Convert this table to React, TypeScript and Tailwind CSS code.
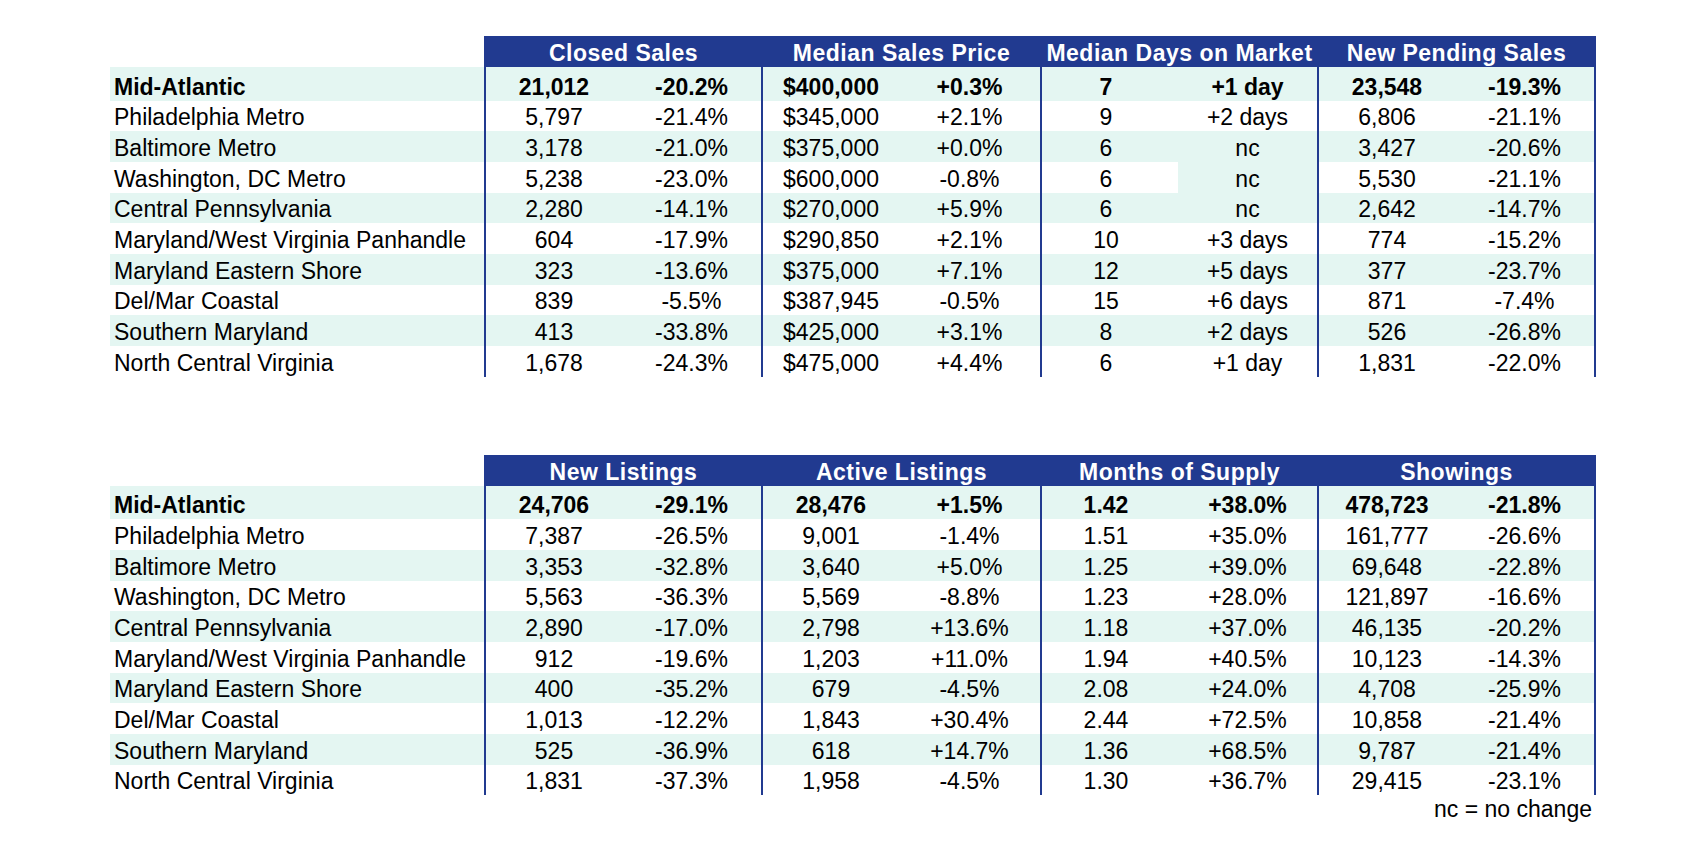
type Row = string[];

const blue = "border-[#213a90]";

const topHeaders = ["Closed Sales", "Median Sales Price", "Median Days on Market", "New Pending Sales"];
const bottomHeaders = ["New Listings", "Active Listings", "Months of Supply", "Showings"];

const topRows: Row[] = [
  ["Mid-Atlantic", "21,012", "-20.2%", "$400,000", "+0.3%", "7", "+1 day", "23,548", "-19.3%"],
  ["Philadelphia Metro", "5,797", "-21.4%", "$345,000", "+2.1%", "9", "+2 days", "6,806", "-21.1%"],
  ["Baltimore Metro", "3,178", "-21.0%", "$375,000", "+0.0%", "6", "nc", "3,427", "-20.6%"],
  ["Washington, DC Metro", "5,238", "-23.0%", "$600,000", "-0.8%", "6", "nc", "5,530", "-21.1%"],
  ["Central Pennsylvania", "2,280", "-14.1%", "$270,000", "+5.9%", "6", "nc", "2,642", "-14.7%"],
  ["Maryland/West Virginia Panhandle", "604", "-17.9%", "$290,850", "+2.1%", "10", "+3 days", "774", "-15.2%"],
  ["Maryland Eastern Shore", "323", "-13.6%", "$375,000", "+7.1%", "12", "+5 days", "377", "-23.7%"],
  ["Del/Mar Coastal", "839", "-5.5%", "$387,945", "-0.5%", "15", "+6 days", "871", "-7.4%"],
  ["Southern Maryland", "413", "-33.8%", "$425,000", "+3.1%", "8", "+2 days", "526", "-26.8%"],
  ["North Central Virginia", "1,678", "-24.3%", "$475,000", "+4.4%", "6", "+1 day", "1,831", "-22.0%"],
];

const bottomRows: Row[] = [
  ["Mid-Atlantic", "24,706", "-29.1%", "28,476", "+1.5%", "1.42", "+38.0%", "478,723", "-21.8%"],
  ["Philadelphia Metro", "7,387", "-26.5%", "9,001", "-1.4%", "1.51", "+35.0%", "161,777", "-26.6%"],
  ["Baltimore Metro", "3,353", "-32.8%", "3,640", "+5.0%", "1.25", "+39.0%", "69,648", "-22.8%"],
  ["Washington, DC Metro", "5,563", "-36.3%", "5,569", "-8.8%", "1.23", "+28.0%", "121,897", "-16.6%"],
  ["Central Pennsylvania", "2,890", "-17.0%", "2,798", "+13.6%", "1.18", "+37.0%", "46,135", "-20.2%"],
  ["Maryland/West Virginia Panhandle", "912", "-19.6%", "1,203", "+11.0%", "1.94", "+40.5%", "10,123", "-14.3%"],
  ["Maryland Eastern Shore", "400", "-35.2%", "679", "-4.5%", "2.08", "+24.0%", "4,708", "-25.9%"],
  ["Del/Mar Coastal", "1,013", "-12.2%", "1,843", "+30.4%", "2.44", "+72.5%", "10,858", "-21.4%"],
  ["Southern Maryland", "525", "-36.9%", "618", "+14.7%", "1.36", "+68.5%", "9,787", "-21.4%"],
  ["North Central Virginia", "1,831", "-37.3%", "1,958", "-4.5%", "1.30", "+36.7%", "29,415", "-23.1%"],
];

// column group widths, px between the blue rules
const groupW = ["w-[277px]", "w-[279px]", "w-[277px]", "w-[279px]"];

function Cell({ text, className = "" }: { text: string; className?: string }) {
  return <div className={`h-full flex items-end justify-center leading-[27px] ${className}`}>{text}</div>;
}

function Table({ headers, rows, tealNc }: { headers: string[]; rows: Row[]; tealNc?: boolean }) {
  return (
    <div className="flex flex-col">
      {/* header bar */}
      <div className="flex h-[31px]">
        <div className="w-[374px]" />
        <div className="flex bg-[#213a90] text-white font-bold tracking-[0.5px]">
          {headers.map((h, i) => (
            <div key={h} className={`${groupW[i]} h-full flex items-end justify-center leading-[27px] pl-[2px] ${i === 3 ? "pr-[2px]" : ""}`}>
              {h}
            </div>
          ))}
        </div>
      </div>

      {rows.map((r, ri) => {
        const teal = ri % 2 === 0;
        const bold = ri === 0;
        return (
          <div
            key={r[0]}
            className={`flex ${ri === 0 ? "h-[33.5px]" : "h-[30.7px]"} ${teal ? "bg-[#e4f6f2]" : "bg-white"} ${bold ? "font-bold" : ""}`}
          >
            <div className="w-[374px] h-full flex items-end pl-[4px] leading-[27px] whitespace-nowrap">{r[0]}</div>
            {[0, 1, 2, 3].map((g) => (
              <div
                key={g}
                className={`${groupW[g]} h-full grid grid-cols-[136px_1fr] border-l-2 ${blue} ${g === 3 ? "border-r-2" : ""}`}
              >
                <Cell text={r[1 + g * 2]} className={g === 2 ? "pr-[8px]" : ""} />
                <Cell
                  text={r[2 + g * 2]}
                  className={tealNc && ri === 3 && g === 2 ? "bg-[#e4f6f2]" : ""}
                />
              </div>
            ))}
          </div>
        );
      })}
    </div>
  );
}

export default function App() {
  return (
    <div className="w-[1704px] h-[850px] bg-white overflow-hidden text-black text-[23px] font-['Liberation_Sans',Arial,sans-serif]">
      <div className="pl-[110px] pt-[36px] w-[1596px] flex flex-col">
        <Table headers={topHeaders} rows={topRows} tealNc />
        <div className="h-[78px]" />
        <Table headers={bottomHeaders} rows={bottomRows} />
        <div className="flex justify-end pr-[4px] mt-[1px] leading-[27px]">nc = no change</div>
      </div>
    </div>
  );
}
